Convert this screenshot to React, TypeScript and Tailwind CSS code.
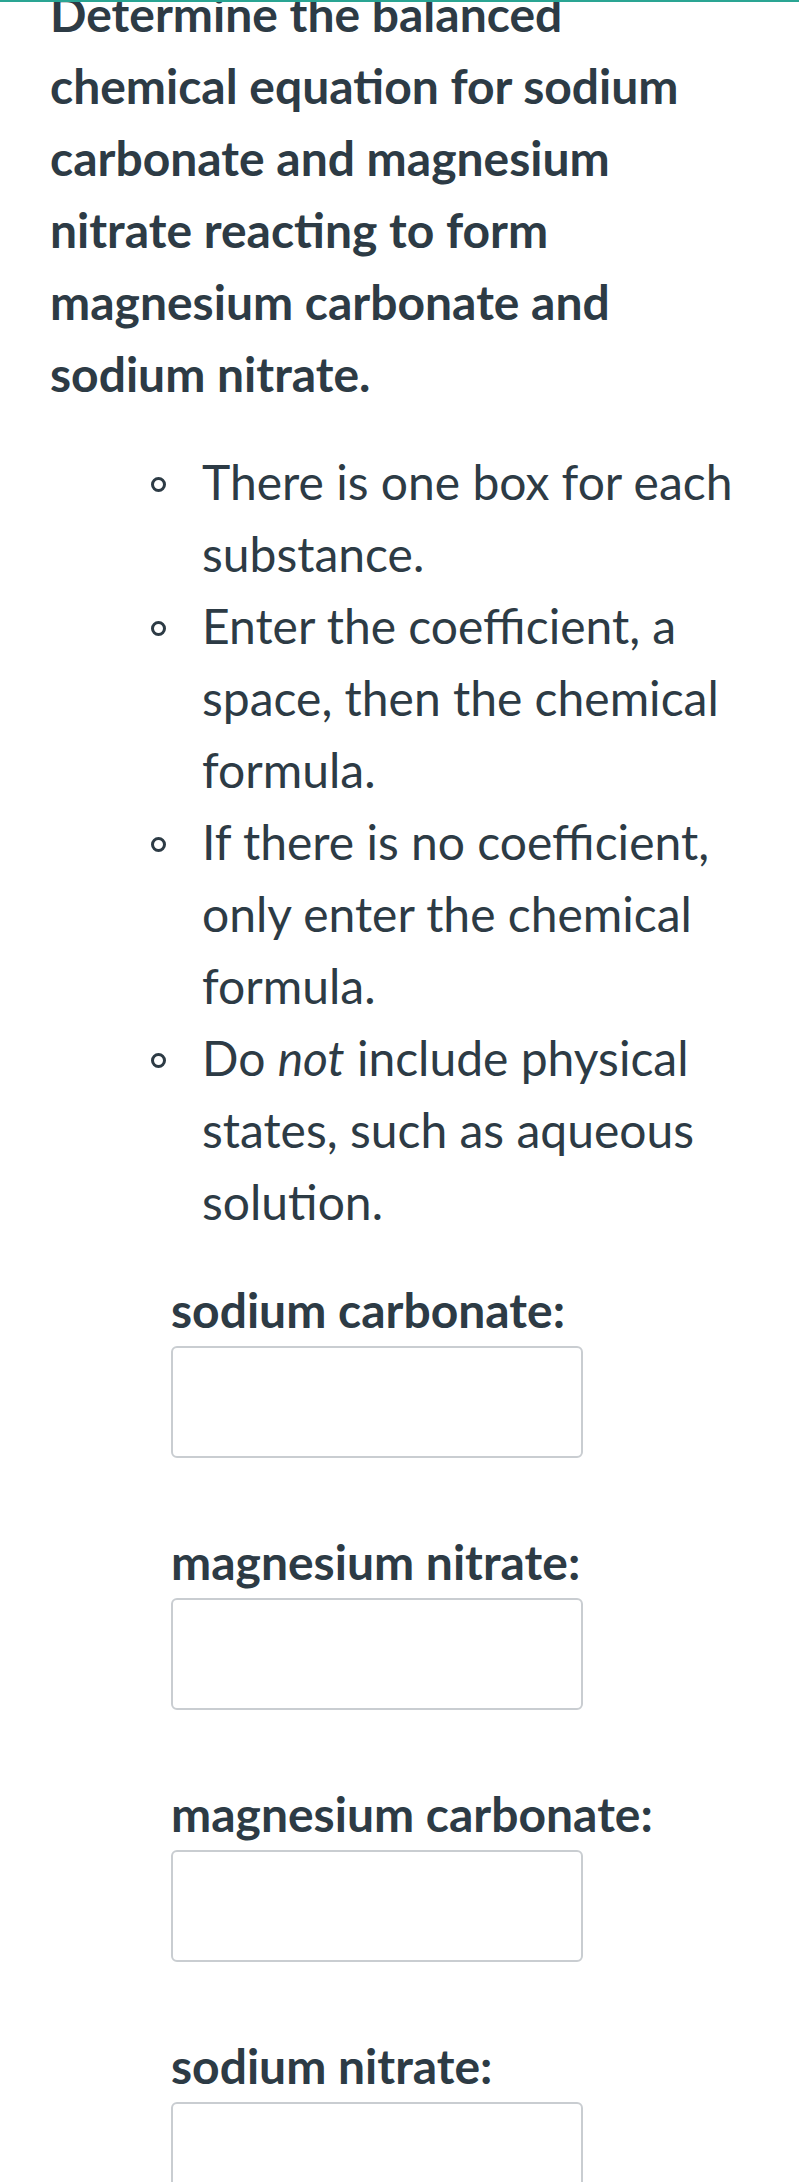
import React from 'react';

const steps: React.ReactNode[] = [
  'There is one box for each substance.',
  'Enter the coefficient, a space, then the chemical formula.',
  'If there is no coefficient, only enter the chemical formula.',
  <>
    Do <em>not</em> include physical states, such as aqueous solution.
  </>,
];

const substances = ['sodium carbonate', 'magnesium nitrate', 'magnesium carbonate', 'sodium nitrate'];

export default function App() {
  return (
    <div className="relative min-h-[2182px] overflow-hidden bg-white font-['Lato',sans-serif] text-[48px] leading-[72px] text-[#2d3b45]">
      {/* header edge */}
      <div className="absolute inset-x-0 top-0 z-10 h-[2px] bg-[#2aa593]" />

      <div className="-mt-[22px] px-[50px]">
        <p className="font-bold">
          Determine the balanced chemical equation for sodium carbonate and magnesium nitrate reacting to form
          magnesium carbonate and sodium nitrate.
        </p>

        <ul className="mt-[36px] pl-[101px]">
          {steps.map((s, i) => (
            <li key={i} className="flex">
              <span className="mt-[31px] mr-[36px] h-[15px] w-[15px] shrink-0 rounded-full border-[3px] border-[#2d3b45]" />
              <span>{s}</span>
            </li>
          ))}
        </ul>

        <div className="mt-[36px] pl-[121px]">
          {substances.map((name) => (
            <div key={name} className="mb-[68px]">
              <label className="block font-bold">{name}:</label>
              <input
                type="text"
                className="block h-[112px] w-[412px] rounded-[6px] border-2 border-[#c9cdd1] bg-white px-4 outline-none"
              />
            </div>
          ))}
        </div>
      </div>
    </div>
  );
}
